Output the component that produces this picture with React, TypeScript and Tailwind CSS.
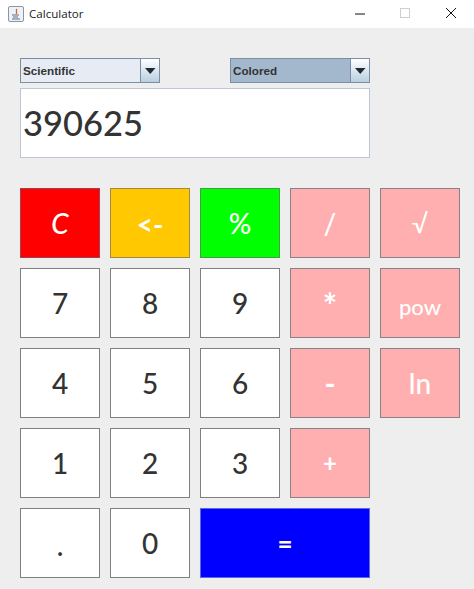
import React from "react";

const comic = "font-['Lato','Open_Sans',sans-serif]";

function Combo({ label, colored }: { label: string; colored?: boolean }) {
  return (
    <div className={`flex h-[25px] w-[140px] border border-[#7b8ea6] ${colored ? "bg-[#a3b8cc]" : "bg-[#e6ebf4]"}`}>
      <div className="flex w-[119px] items-center pl-[2px] font-['Liberation_Sans',sans-serif] text-[11.7px] font-bold text-[#333333]">{label}</div>
      <div className="flex flex-1 items-center justify-center border-l border-[#7b8ea6] bg-gradient-to-b from-[#ffffff] to-[#b8cfe0]">
        <svg width="11" height="6" viewBox="0 0 11 6"><path d="M0 0h10.5L5.25 6z" fill="#1f2a36" /></svg>
      </div>
    </div>
  );
}

type B = { t: string; c: string; size?: string };
const row = "bg-white text-[#333333] border-[#808080] font-medium";
const pink = "bg-[#ffafaf] text-white border-[#8a8088]";
const buttons: B[] = [
  { t: "C", c: "bg-[#ff0000] text-white border-[#a04050] font-medium", size: "text-[28px] italic" },
  { t: "<-", c: "bg-[#ffc800] text-white border-[#a08a40] font-bold", size: "text-[28px] pt-[2px]" },
  { t: "%", c: "bg-[#00ff00] text-white border-[#40a040] font-medium", size: "text-[28px]" },
  { t: "/", c: pink, size: "text-[28px] font-medium" },
  { t: "√", c: pink, size: "text-[26px]" },
  { t: "7", c: row, size: "text-[28px]" },
  { t: "8", c: row, size: "text-[28px]" },
  { t: "9", c: row, size: "text-[28px]" },
  { t: "*", c: pink, size: "text-[34px] font-bold pt-[2px]" },
  { t: "pow", c: pink, size: "text-[22px] font-medium pt-[6px]" },
  { t: "4", c: row, size: "text-[28px]" },
  { t: "5", c: row, size: "text-[28px]" },
  { t: "6", c: row, size: "text-[28px]" },
  { t: "-", c: pink, size: "text-[30px] font-bold" },
  { t: "ln", c: pink, size: "text-[28px] font-medium" },
  { t: "1", c: row, size: "text-[28px]" },
  { t: "2", c: row, size: "text-[28px]" },
  { t: "3", c: row, size: "text-[28px]" },
  { t: "+", c: pink, size: "text-[24px] font-bold" },
  { t: "", c: "invisible" },
  { t: ".", c: row, size: "text-[28px] pt-[3px]" },
  { t: "0", c: row, size: "text-[28px]" },
  { t: "=", c: "bg-[#0000ff] text-white border-[#5a6ae0] col-span-2 font-bold", size: "text-[26px]" },
];

export default function App() {
  return (
    <div className="flex h-[589px] w-[474px] flex-col overflow-hidden bg-[#eeeeee]">
      <div className="flex h-[28px] items-center bg-white">
        <div className="ml-[8px] flex h-[16px] w-[16px] items-center justify-center rounded-[2px] border border-[#8a94a6] bg-[#eef1f6]">
          <svg width="12" height="12" viewBox="0 0 12 12" fill="none">
            <path d="M7 1C5 3 8 4 6 6" stroke="#d2691e" strokeWidth="1.3" />
            <path d="M2 7h7M3 9h5M2 11h8" stroke="#5a6f8c" strokeWidth="1" />
          </svg>
        </div>
        <span className="ml-[5px] mb-[1px] font-['Open_Sans',sans-serif] text-[11.6px] text-[#1a1a1a]">Calculator</span>
        <div className="ml-auto flex items-center">
          <svg width="10" height="2" viewBox="0 0 10 2" className="mb-[1px] mr-[35px]"><path d="M0 1h10" stroke="#111" /></svg>
          <svg width="10" height="10" viewBox="0 0 10 10" className="mb-[3px] mr-[36px]"><rect x=".5" y=".5" width="9" height="9" fill="none" stroke="#cfcfcf" /></svg>
          <svg width="10" height="10" viewBox="0 0 10 10" className="mb-[3px] mr-[18px]"><path d="M0 0l10 10M10 0L0 10" stroke="#111" /></svg>
        </div>
      </div>

      <div className="ml-[20px] mt-[30px] flex w-[350px] justify-between">
        <Combo label="Scientific" />
        <Combo label="Colored" colored />
      </div>

      <div className={`ml-[20px] mt-[5px] flex h-[70px] w-[350px] items-center border border-[#bcc6d4] bg-white pl-[2px] ${comic} text-[34.5px] font-medium text-[#333333]`}>
        390625
      </div>

      <div className={`ml-[20px] mt-[30px] grid grid-cols-[repeat(5,80px)] auto-rows-[70px] gap-[10px] ${comic}`}>
        {buttons.map((b, i) => (
          <div key={i} className={`flex items-center justify-center border ${b.c} ${b.size ?? ""}`}>
            {b.t}
          </div>
        ))}
      </div>
    </div>
  );
}
